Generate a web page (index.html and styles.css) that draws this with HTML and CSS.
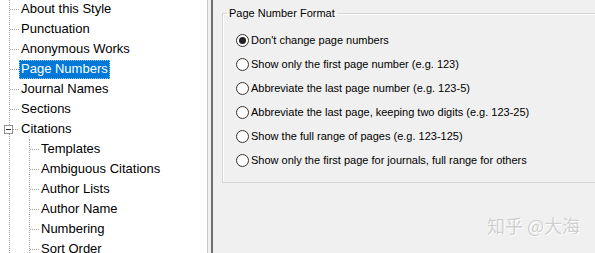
FILE: index.html
```html
<!DOCTYPE html>
<html lang="en">
<head>
    <meta charset="UTF-8">
    <title>Page Numbers</title>
    <link rel="stylesheet" href="styles.css">
</head>
<body>

    <!-- Arbol de secciones del estilo -->
    <nav class="tree-panel">
        <ul class="tree">
            <li><span class="label">About this Style</span></li>
            <li><span class="label">Punctuation</span></li>
            <li><span class="label">Anonymous Works</span></li>
            <li class="selected"><span class="label">Page Numbers</span></li>
            <li><span class="label">Journal Names</span></li>
            <li><span class="label">Sections</span></li>
            <li class="parent"><span class="expander"></span><span class="label">Citations</span></li>
            <li class="children">
                <ul class="sub">
                    <li><span class="label">Templates</span></li>
                    <li><span class="label">Ambiguous Citations</span></li>
                    <li><span class="label">Author Lists</span></li>
                    <li><span class="label">Author Name</span></li>
                    <li><span class="label">Numbering</span></li>
                    <li><span class="label">Sort Order</span></li>
                </ul>
            </li>
        </ul>
    </nav>

    <div class="splitter"></div>

    <!-- Opciones de formato -->
    <main class="options-panel">
        <fieldset class="group">
            <legend>Page Number Format</legend>
            <label class="option"><input type="radio" name="pages" checked> Don't change page numbers</label>
            <label class="option"><input type="radio" name="pages"> Show only the first page number (e.g. 123)</label>
            <label class="option"><input type="radio" name="pages"> Abbreviate the last page number (e.g. 123-5)</label>
            <label class="option"><input type="radio" name="pages"> Abbreviate the last page, keeping two digits (e.g. 123-25)</label>
            <label class="option"><input type="radio" name="pages"> Show the full range of pages (e.g. 123-125)</label>
            <label class="option"><input type="radio" name="pages"> Show only the first page for journals, full range for others</label>
        </fieldset>
        <div class="watermark">知乎 @大海</div>
    </main>

</body>
</html>
```

FILE: styles.css
```css
/* Estilos básicos */
body {
    margin: 0;
    padding: 0;
    width: 595px;
    height: 253px;
    overflow: hidden;
    display: flex;
    background-color: #f0f0f0;
    font-family: "Liberation Sans", Arial, "Noto Sans CJK SC", sans-serif;
    color: #000;
}

/* Panel izquierdo */
.tree-panel {
    width: 207px;
    flex: none;
    background-color: #fff;
    overflow: hidden;
    font-size: 13px;
}
.tree {
    list-style: none;
    margin: 9px 0 0 9px;
    padding: 0;
    border-left: 1px dotted #a0a0a0;
}
.tree li {
    height: 20px;
    display: flex;
    align-items: center;
}
.tree > li:first-child {
    margin-top: -10px;
}
.tree li::before {
    content: "";
    width: 9px;
    flex: none;
    border-top: 1px dotted #a0a0a0;
}
.tree .label {
    padding: 1px 2px 2px;
    line-height: 16px;
    white-space: nowrap;
}
.tree .selected .label {
    background-color: #0078d7;
    color: #fff;
    outline: 1px dotted #9cc7ef;
    outline-offset: -1px;
}
.tree .parent::before {
    display: none;
}
.expander {
    width: 7px;
    height: 7px;
    margin-left: -6px;
    border: 1px solid #919191;
    background-color: #fff;
    position: relative;
    flex: none;
}
.expander::before {
    content: "";
    position: absolute;
    left: 1px;
    top: 3px;
    width: 5px;
    height: 1px;
    background-color: #333;
}
.expander::after {
    content: "";
    width: 5px;
    border-top: 1px dotted #a0a0a0;
    position: absolute;
    left: 8px;
    top: 3px;
}
.tree .parent .label {
    margin-left: 6px;
}
.tree li.children {
    height: auto;
    display: block;
}
.tree li.children::before {
    display: none;
}
.sub {
    list-style: none;
    margin: 0 0 0 19px;
    padding: 0;
    border-left: 1px dotted #a0a0a0;
}

/* Separador */
.splitter {
    width: 6px;
    flex: none;
    border-left: 1px solid #c8c8c8;
    box-sizing: border-box;
    background: linear-gradient(to right, #f0f0f0 3px, #6e6e6e 3px);
}

/* Panel derecho */
.options-panel {
    flex: 1;
    position: relative;
    overflow: hidden;
}
.group {
    margin: 5px -20px 0 9px;
    padding: 6px 0 10px 13px;
    border: 1px solid #d5d5d5;
    box-shadow: inset 1px 1px 0 #fff;
    display: flex;
    flex-direction: column;
    font-size: 11px;
}
.group legend {
    padding: 0 2px;
    margin-left: -9px;
    line-height: 17px;
}
.option {
    height: 24px;
    flex: none;
    display: flex;
    align-items: center;
    white-space: nowrap;
}
.option input {
    appearance: none;
    width: 13px;
    height: 13px;
    margin: 0 2px 0 0;
    border: 1px solid #333;
    border-radius: 50%;
    background-color: #fff;
    box-sizing: border-box;
    display: grid;
    place-content: center;
}
.option input:checked::before {
    content: "";
    width: 7px;
    height: 7px;
    border-radius: 50%;
    background-color: #222;
}
.watermark {
    position: absolute;
    right: 15px;
    bottom: 15px;
    font-family: "Noto Sans CJK SC", sans-serif;
    font-size: 18px;
    color: #cfcfcf;
    text-shadow: 0 0 1px #fff, 1px 1px 0 #fff;
}
```
